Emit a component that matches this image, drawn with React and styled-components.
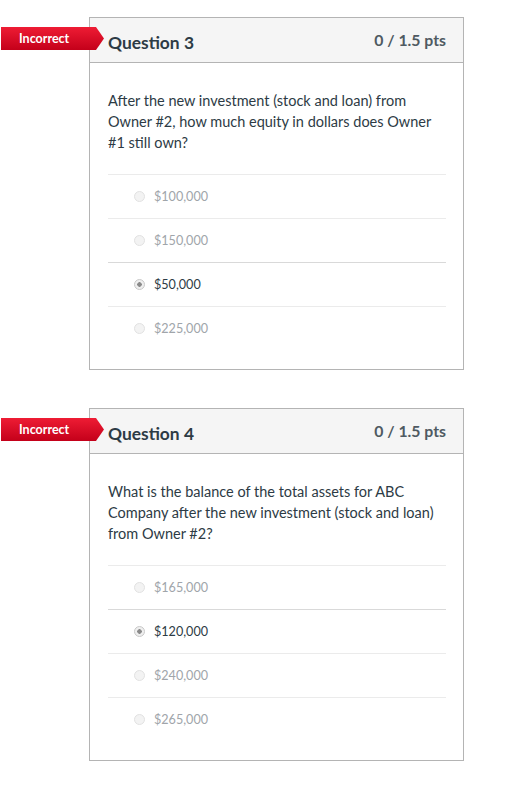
import React from 'react';
import styled, { createGlobalStyle } from 'styled-components';

const questions = [
	{
		number: 3,
		points: '0 / 1.5 pts',
		text: 'After the new investment (stock and loan) from Owner #2, how much equity in dollars does Owner #1 still own?',
		answers: ['$100,000', '$150,000', '$50,000', '$225,000'],
		selected: 2,
	},
	{
		number: 4,
		points: '0 / 1.5 pts',
		text: 'What is the balance of the total assets for ABC Company after the new investment (stock and loan) from Owner #2?',
		answers: ['$165,000', '$120,000', '$240,000', '$265,000'],
		selected: 1,
	},
];

function App() {
	return (
		<>
			<GlobalStyle />
			<Page>
				{questions.map((q) => (
					<Card key={q.number}>
						<Banner>Incorrect</Banner>
						<Header>
							<Title>Question {q.number}</Title>
							<Points>{q.points}</Points>
						</Header>
						<Body>
							<QuestionText>{q.text}</QuestionText>
							<Answers>
								{q.answers.map((a, i) => (
									<Answer key={a} $darkTop={i === q.selected}>
										<Radio $checked={i === q.selected} />
										<AnswerLabel $checked={i === q.selected}>{a}</AnswerLabel>
									</Answer>
								))}
							</Answers>
						</Body>
					</Card>
				))}
			</Page>
		</>
	);
}

export default App;

const GlobalStyle = createGlobalStyle`
	body {
		margin: 0;
		background: #ffffff;
		font-family: Lato, "Open Sans", sans-serif;
	}
`;

const Page = styled.div`
	padding: 17px 0 0 89px;
`;

const Card = styled.div`
	position: relative;
	width: 375px;
	box-sizing: border-box;
	border: 1px solid #b4b4b4;
	margin-bottom: 38px;
`;

// 빨간 리본
const Banner = styled.div`
	position: absolute;
	left: -89px;
	top: 9px;
	width: 103px;
	height: 23px;
	box-sizing: border-box;
	padding-left: 18px;
	display: flex;
	align-items: center;
	background: linear-gradient(#ee1c34, #c4001a);
	clip-path: polygon(0 0, 95px 0, 103px 50%, 95px 100%, 0 100%);
	color: white;
	font-size: 12.5px;
	font-weight: bold;
	z-index: 2;
`;

const Header = styled.div`
	height: 45px;
	box-sizing: border-box;
	background: #f5f5f5;
	border-bottom: 1px solid #b4b4b4;
	display: flex;
	justify-content: space-between;
	align-items: center;
	padding: 0 17px 0 18px;
`;

const Title = styled.span`
	margin-top: 5px;
	font-size: 17.4px;
	font-weight: bold;
	color: #2d3b45;
`;

const Points = styled.span`
	margin-bottom: 1px;
	font-size: 15.8px;
	font-weight: bold;
	color: #4f5a62;
`;

const Body = styled.div`
	padding: 27px 17px 19px 18px;
`;

const QuestionText = styled.div`
	font-size: 14.5px;
	line-height: 21px;
	color: #2d3b45;
	margin-bottom: 21px;
`;

const Answers = styled.div`
	display: flex;
	flex-direction: column;
`;

const Answer = styled.div`
	height: 44px;
	box-sizing: border-box;
	border-top: 1px solid ${(p) => (p.$darkTop ? '#d9d9d9' : '#ebebeb')};
	display: flex;
	align-items: center;
	padding-left: 26px;
	gap: 9px;
`;

const Radio = styled.span`
	width: 11px;
	height: 11px;
	box-sizing: border-box;
	border-radius: 50%;
	border: 1px solid ${(p) => (p.$checked ? '#c8c8c8' : '#e2e2e2')};
	background: ${(p) =>
		p.$checked ? 'radial-gradient(circle, #8a8a8a 0 2px, #efefef 2.5px)' : '#f3f3f3'};
`;

const AnswerLabel = styled.span`
	font-size: 12.6px;
	color: ${(p) => (p.$checked ? '#2d3b45' : '#a0a5aa')};
`;
